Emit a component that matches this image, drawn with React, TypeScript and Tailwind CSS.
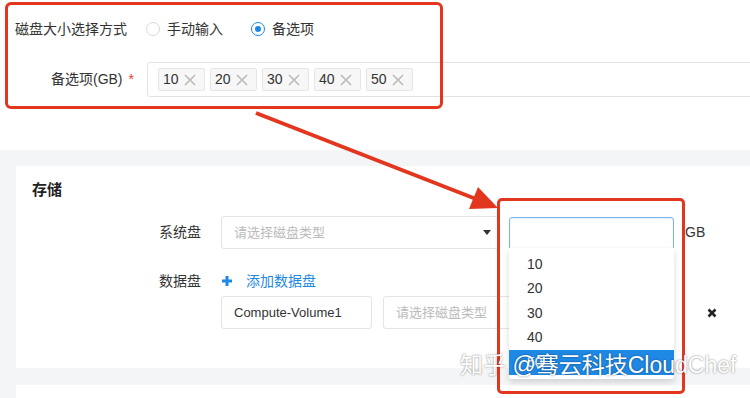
import React from "react";

const font = "font-['Liberation_Sans','Noto_Sans_CJK_SC',sans-serif]";

const TagX = () => (
  <svg width="12" height="12" viewBox="0 0 12 12" className="shrink-0">
    <path d="M1 1L11 11M11 1L1 11" stroke="#b5b5b5" strokeWidth="1.4" />
  </svg>
);

const Radio = ({ checked, label }: { checked?: boolean; label: string }) => (
  <div className="flex items-center gap-[7px]">
    <span
      className={`w-[14px] h-[14px] rounded-full border flex items-center justify-center bg-white ${
        checked ? "border-[#1e88e5]" : "border-[#d9d9d9]"
      }`}
    >
      {checked && <span className="w-[6px] h-[6px] rounded-full bg-[#1e88e5]" />}
    </span>
    <span className="text-[14px] text-[#333]">{label}</span>
  </div>
);

export default function App() {
  const tags = ["10", "20", "30", "40", "50"];
  const options = ["10", "20", "30", "40", "50"];

  return (
    <div className={`relative w-[750px] h-[398px] overflow-hidden bg-white ${font}`}>
      {/* top form */}
      <div className="h-[150px] pt-[18px]">
        <div className="flex items-center h-[22px] pl-[15px]">
          <span className="text-[14px] text-[#333] w-[131px]">磁盘大小选择方式</span>
          <Radio label="手动输入" />
          <div className="ml-[28px]">
            <Radio checked label="备选项" />
          </div>
        </div>
        <div className="flex items-center mt-[22px] pl-[15px] -mr-[4px]">
          <div className="w-[132px] flex justify-end pr-[13px] text-[14px] text-[#333]">
            备选项(GB)<span className="text-[#e5393a] ml-[6px]">*</span>
          </div>
          <div className="flex-1 h-[35px] border border-[#e3e3e3] rounded-[3px] flex items-center gap-[5px] pl-[10px]">
            {tags.map((t) => (
              <div
                key={t}
                className="h-[23px] w-[47px] flex items-center gap-[5px] pl-[4px] bg-[#f7f7f7] border border-[#e6e6e6] rounded-[2px] text-[14px] text-[#333]"
              >
                {t}
                <TagX />
              </div>
            ))}
          </div>
        </div>
      </div>

      {/* storage section */}
      <div className="bg-[#f4f5f7] pl-4 pt-4 flex flex-col gap-[17px] h-[248px]">
        <div className="bg-white h-[202px] pl-4 pt-[14px]">
          <div className="text-[15px] font-bold text-[#222] leading-[20px]">存储</div>
          <div className="flex items-center mt-[16px] -ml-4">
            <div className="w-[185px] text-right text-[14px] text-[#333]">系统盘</div>
            <div className="ml-[20px] w-[279px] h-[33px] border border-[#e4e4e4] rounded-[3px] flex items-center justify-between pl-[12px] pr-[8px]">
              <span className="text-[13px] text-[#bbb]">请选择磁盘类型</span>
              <svg width="8" height="5" viewBox="0 0 8 5">
                <path d="M0 0H8L4 5Z" fill="#333" />
              </svg>
            </div>
            <div className="ml-[9px] w-[165px] h-[32px] border border-[#7fb3e6] rounded-t-[3px] bg-white shadow-[inset_0_1px_2px_rgba(30,136,229,0.15)]" />
            <span className="ml-[11px] text-[14px] text-[#333]">GB</span>
          </div>
          <div className="flex items-center mt-[22px] h-[20px] -ml-4">
            <div className="w-[185px] text-right text-[14px] text-[#333]">数据盘</div>
            <svg width="12" height="12" viewBox="0 0 12 12" className="ml-[20px]">
              <path d="M6 1V11M1 6H11" stroke="#1e88e5" strokeWidth="3" />
            </svg>
            <span className="ml-[13px] text-[14px] text-[#1e88e5]">添加数据盘</span>
          </div>
          <div className="flex items-center mt-[5px] pl-[205px] -ml-4">
            <div className="w-[151px] h-[33px] border border-[#e4e4e4] rounded-[3px] flex items-center pl-[12px] text-[13px] text-[#333]">
              Compute-Volume1
            </div>
            <div className="ml-[11px] w-[270px] h-[33px] border border-[#e4e4e4] rounded-[3px] flex items-center pl-[12px]">
              <span className="text-[13px] text-[#bbb]">请选择磁盘类型</span>
            </div>
            <svg width="10" height="10" viewBox="0 0 10 10" className="ml-[54px]">
              <path d="M1.5 1.5L8.5 8.5M8.5 1.5L1.5 8.5" stroke="#222" strokeWidth="2.6" />
            </svg>
          </div>
        </div>
        <div className="bg-white flex-1" />
      </div>

      {/* dropdown list */}
      <div className="absolute left-[509px] top-[248px] w-[165px] bg-white pt-[4px] pb-[4px] shadow-[0_3px_6px_rgba(0,0,0,0.15)] rounded-b-[3px]">
        {options.map((o, i) => (
          <div
            key={o}
            className={`h-[24.5px] flex items-center pl-[18px] text-[14px] ${
              i === 4 ? "bg-[#1e88e5] text-white" : "text-[#333]"
            }`}
          >
            {o}
          </div>
        ))}
      </div>

      {/* annotations */}
      <div className="absolute left-[5px] top-[2px] w-[438px] h-[107px] border-[3px] border-[#e2361f] rounded-[6px]" />
      <div className="absolute left-[497px] top-[198px] w-[188px] h-[196px] border-[3px] border-[#e2361f] rounded-[5px]" />
      <svg className="absolute left-0 top-0" width="750" height="398" viewBox="0 0 750 398">
        <line x1="256" y1="113" x2="476" y2="199" stroke="#e2361f" strokeWidth="4" />
        <polygon points="498,208 469,209 478,187" fill="#e2361f" />
      </svg>

      {/* watermark */}
      <div className="absolute left-[460px] top-[350px] text-[23px] leading-[30px] text-white whitespace-nowrap [text-shadow:0_0_2px_rgba(0,0,0,0.55)]">
        知乎 @骞云科技CloudChef
      </div>
    </div>
  );
}
